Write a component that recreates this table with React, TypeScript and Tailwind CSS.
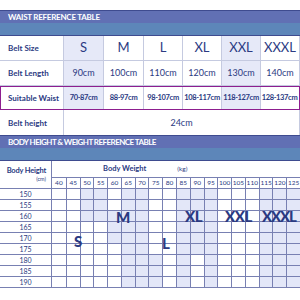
import React from 'react';

const sizes = ['S', 'M', 'L', 'XL', 'XXL', 'XXXL'];
const lengths = ['90cm', '100cm', '110cm', '120cm', '130cm', '140cm'];
const waists = ['70-87cm', '88-97cm', '98-107cm', '108-117cm', '118-127cm', '128-137cm'];
const colShade = ['bg-[#e6e9f8]', 'bg-white', 'bg-white', 'bg-white', 'bg-[#e6e9f8]', 'bg-white'];

const weights = [40, 45, 50, 55, 60, 65, 70, 75, 80, 85, 90, 95, 100, 105, 110, 115, 120, 125];
const heights = [150, 155, 160, 165, 170, 175, 180, 185, 190];

// shaded column indexes per height row (M, XL, XXXL zones)
const shaded: number[][] = [
  [2, 3, 5, 6, 9, 10, 11, 15, 16, 17],
  [2, 3, 5, 6, 9, 10, 11, 15, 16, 17],
  [2, 3, 4, 5, 6, 9, 10, 11, 15, 16, 17],
  [4, 5, 6, 9, 10, 11, 15, 16, 17],
  [4, 5, 6, 9, 10, 11, 15, 16, 17],
  [5, 6, 9, 10, 11, 15, 16, 17],
  [5, 6, 7, 9, 11, 15, 16, 17],
  [5, 6, 7, 9, 11, 15, 16, 17],
  [5, 6, 7, 9, 11, 15, 16, 17],
];

const Header = ({ title, tight }: { title: string; tight?: boolean }) => (
  <div className="border-y border-[#3e4b8f]">
    <div
      className={`h-[12px] bg-[#6170b4] flex items-center pl-[8px] text-[8px] font-bold text-white leading-none whitespace-nowrap ${
        tight ? 'tracking-[-0.55px]' : 'tracking-[-0.25px]'
      }`}
    >
      {title}
    </div>
    <div className="h-[12px] bg-[#5d86b9]" />
  </div>
);

const App = () => {
  return (
    <div className="w-[300px] h-[300px] bg-white overflow-hidden font-['Lato','Open_Sans',sans-serif] text-[#2b3a82]">
      <div className="h-[10px]" />
      <Header title="WAIST REFERENCE TABLE" />

      <div className="grid grid-cols-[63px_40px_40px_39px_39px_39px_39px] border-r border-[#c5cae0] w-[300px]">
        <div className="h-[25px] flex items-center pl-[8px] text-[8px] font-bold border-b border-[#c5cae0]">Belt Size</div>
        {sizes.map((s, i) => (
          <div key={s} className={`h-[25px] flex items-center justify-center text-[13px] border-l border-b border-[#c5cae0] ${colShade[i]}`}>
            {s}
          </div>
        ))}
        <div className="h-[25px] flex items-center pl-[8px] text-[8px] font-bold border-b border-[#c5cae0]">Belt Length</div>
        {lengths.map((s, i) => (
          <div key={s} className={`h-[25px] flex items-center justify-center text-[9px] border-l border-b border-[#c5cae0] ${colShade[i]}`}>
            {s}
          </div>
        ))}
      </div>

      <div className="grid grid-cols-[62px_40px_40px_39px_39px_39px_38px] border-[1.5px] border-[#8d1e8f] w-[300px] h-[24px]">
        <div className="flex items-center pl-[7px] text-[8px] font-bold whitespace-nowrap">Suitable Waist</div>
        {waists.map((s, i) => (
          <div
            key={s}
            className={`flex items-center justify-center text-[7.5px] font-bold tracking-[-0.35px] whitespace-nowrap overflow-hidden border-l border-[#c5cae0] ${colShade[i]}`}
          >
            {s}
          </div>
        ))}
      </div>

      <div className="flex h-[25px] border-r border-[#c5cae0] w-[300px]">
        <div className="w-[63px] flex items-center pl-[8px] text-[8px] font-bold">Belt height</div>
        <div className="flex-1 flex items-center justify-center text-[9px] border-l border-[#c5cae0]">24cm</div>
      </div>

      <Header title="BODY HEIGHT & WEIGHT REFERENCE TABLE" tight />

      <div className="flex">
        <div className="w-[52px] shrink-0 border-r border-[#7880b2]">
          <div className="h-[28px] flex flex-col items-end pr-[5px] pt-[5px] border-b border-[#7880b2]">
            <div className="text-[7.5px] font-bold leading-[10px] tracking-[-0.2px]">Body Height</div>
            <div className="text-[5.5px] leading-[7px]">(cm)</div>
          </div>
          {heights.map((h) => (
            <div key={h} className="h-[11px] flex items-center justify-center text-[7px] border-b border-[#7880b2] leading-none">
              {h}
            </div>
          ))}
        </div>
        <div className="flex-1 relative">
          <div className="h-[17px] flex items-center text-[7.5px] font-bold border-b border-[#7880b2]">
            <span className="ml-[51px]">Body Weight</span>
            <span className="ml-[31px] font-normal text-[6.5px]">(kg)</span>
          </div>
          <div className="grid grid-cols-[repeat(18,1fr)]">
            {weights.map((w, i) => (
              <div key={w} className={`h-[11px] flex items-center justify-center text-[6.5px] leading-none border-b border-[#7880b2] ${i > 0 ? 'border-l' : ''}`}>
                {w}
              </div>
            ))}
            {heights.map((h, r) =>
              weights.map((w, i) => (
                <div
                  key={`${h}-${w}`}
                  className={`h-[11px] border-b border-[#7880b2] ${i > 0 ? 'border-l' : ''} ${shaded[r].includes(i) ? 'bg-[#e3e7f8]' : 'bg-white'}`}
                />
              ))
            )}
          </div>
          <span className="absolute left-[22px] top-[73px] text-[15px] font-black leading-none">S</span>
          <span className="absolute left-[64px] top-[49px] text-[15px] font-black leading-none">M</span>
          <span className="absolute left-[110px] top-[75px] text-[15px] font-black leading-none">L</span>
          <span className="absolute left-[133px] top-[48px] text-[15px] font-black leading-none tracking-[-0.5px]">XL</span>
          <span className="absolute left-[173px] top-[48px] text-[15px] font-black leading-none tracking-[-0.5px]">XXL</span>
          <span className="absolute left-[210px] top-[48px] text-[15px] font-black leading-none tracking-[-1.2px]">XXXL</span>
        </div>
      </div>
    </div>
  );
};

export default App;
